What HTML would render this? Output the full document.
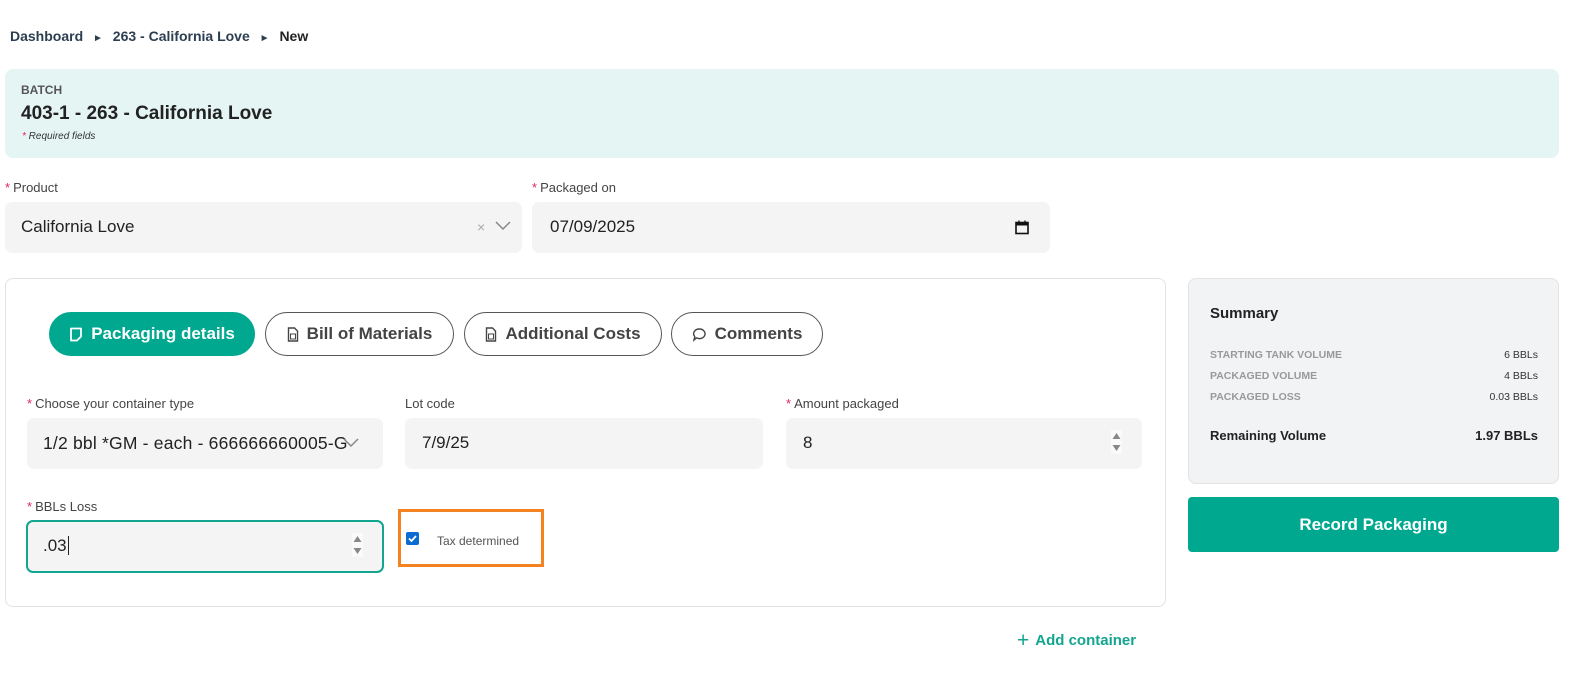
<!DOCTYPE html>
<html><head><style>
*{box-sizing:border-box;margin:0;padding:0}
body{width:1593px;height:700px;background:#fff;font-family:"Liberation Sans",sans-serif;color:#222;position:relative;overflow:hidden}
.a{position:absolute;white-space:nowrap}
.fld{position:absolute;background:#f4f4f4;border-radius:7px}
.lbl{position:absolute;font-size:13px;color:#444;white-space:nowrap}
.lbl b{color:#e0245e;font-weight:normal;margin-right:3px}
.tab{position:absolute;top:312px;height:44px;border:1px solid #555;border-radius:22px;font-size:17px;font-weight:bold;color:#444;display:flex;align-items:center;justify-content:center;gap:8px}
.row{position:absolute;left:1210px;width:328px;display:flex;justify-content:space-between;font-size:10.5px;color:#999;font-weight:bold}
.row span:last-child{color:#333;font-weight:normal}
.spin{position:absolute;width:11px;height:24px}
</style></head><body>
<div class="a" style="left:10px;top:28px;font-size:14px;font-weight:bold;color:#2c3e50">Dashboard <span style="font-size:10px;margin:0 6px">&#9658;</span> 263 - California Love <span style="font-size:10px;margin:0 6px">&#9658;</span> <span style="color:#222">New</span></div>

<div class="a" style="left:5px;top:69px;width:1554px;height:89px;background:#e5f5f3;border-radius:8px"></div>
<div class="a" style="left:21px;top:83px;font-size:12px;font-weight:bold;color:#555">BATCH</div>
<div class="a" style="left:21px;top:103px;font-size:19px;font-weight:bold;color:#222">403-1 - 263 - California Love</div>
<div class="a" style="left:22px;top:131px;font-size:10px;font-style:italic;color:#333"><span style="color:#e0245e">*</span> Required fields</div>

<div class="lbl" style="left:5px;top:180px"><b>*</b>Product</div>
<div class="fld" style="left:5px;top:202px;width:517px;height:51px"></div>
<div class="a" style="left:21px;top:217px;font-size:17px">California Love</div>
<div class="a" style="left:477px;top:219px;font-size:14px;color:#aaa">×</div>
<svg class="a" style="left:495px;top:221px" width="16" height="10"><path d="M1 1l7 7 7-7" fill="none" stroke="#888" stroke-width="1.5"/></svg>

<div class="lbl" style="left:532px;top:180px"><b>*</b>Packaged on</div>
<div class="fld" style="left:532px;top:202px;width:518px;height:51px"></div>
<div class="a" style="left:550px;top:217px;font-size:17px">07/09/2025</div>
<svg class="a" style="left:1015px;top:220px" width="14" height="15"><rect x="1" y="2.5" width="12" height="11" fill="none" stroke="#111" stroke-width="1.6"/><rect x="1" y="2.5" width="12" height="3" fill="#111"/><path d="M4 0.5v3M10 0.5v3" stroke="#111" stroke-width="1.3"/></svg>

<div class="a" style="left:5px;top:278px;width:1161px;height:329px;border:1px solid #e3e3e3;border-radius:8px"></div>

<div class="tab" style="left:49px;width:206px;background:#00a88f;border-color:#00a88f;color:#fff">
<svg width="14" height="15"><path d="M2 1.5h10v8l-4 4H2z" fill="none" stroke="#fff" stroke-width="1.8" stroke-linejoin="round"/></svg>Packaging details</div>
<div class="tab" style="left:265px;width:189px"><svg width="12" height="15"><path d="M1.5 1h6l3 3v10h-9z" fill="none" stroke="#444" stroke-width="1.4"/><rect x="3.5" y="7" width="5" height="5" fill="none" stroke="#444"/></svg>Bill of Materials</div>
<div class="tab" style="left:464px;width:198px"><svg width="12" height="15"><path d="M1.5 1h6l3 3v10h-9z" fill="none" stroke="#444" stroke-width="1.4"/><rect x="3.5" y="7" width="5" height="5" fill="none" stroke="#444"/></svg>Additional Costs</div>
<div class="tab" style="left:671px;width:152px"><svg width="15" height="15"><path d="M7.5 2a5.5 4.8 0 1 1-3 8.8L2 13l.8-3.3A5.5 4.8 0 0 1 7.5 2z" fill="none" stroke="#444" stroke-width="1.4"/></svg>Comments</div>

<div class="lbl" style="left:27px;top:396px"><b>*</b>Choose your container type</div>
<div class="fld" style="left:27px;top:418px;width:356px;height:51px;overflow:hidden"><div class="a" style="left:16px;top:15px;font-size:17.5px;letter-spacing:0.2px">1/2 bbl *GM - each - 666666660005-G</div>
<svg class="a" style="left:316px;top:20px" width="16" height="10"><path d="M1 1l7 7 7-7" fill="none" stroke="#888" stroke-width="1.5"/></svg></div>
<div class="lbl" style="left:405px;top:396px">Lot code</div>
<div class="fld" style="left:405px;top:418px;width:358px;height:51px"></div>
<div class="a" style="left:422px;top:433px;font-size:17px">7/9/25</div>
<div class="lbl" style="left:786px;top:396px"><b>*</b>Amount packaged</div>
<div class="fld" style="left:786px;top:418px;width:356px;height:51px"></div>
<div class="a" style="left:803px;top:433px;font-size:17px">8</div>
<svg class="spin" style="left:1111px;top:430px"><rect width="11" height="24" fill="#fafafa"/><path d="M1.5 9L5.5 3 9.5 9zM1.5 15l4 6 4-6z" fill="#888"/></svg>

<div class="lbl" style="left:27px;top:499px"><b>*</b>BBLs Loss</div>
<div class="fld" style="left:26px;top:520px;width:358px;height:53px;border:2px solid #12a58f"></div>
<div class="a" style="left:43px;top:536px;font-size:17px">.03<span style="border-left:1px solid #222;margin-left:1px"></span></div>
<svg class="spin" style="left:352px;top:533px"><rect width="11" height="24" fill="#fafafa"/><path d="M1.5 9L5.5 3 9.5 9zM1.5 15l4 6 4-6z" fill="#888"/></svg>

<div class="a" style="left:398px;top:509px;width:146px;height:58px;border:3px solid #f58220"></div>
<svg class="a" style="left:406px;top:532px" width="13" height="13"><rect width="13" height="13" rx="2" fill="#0b6bd3"/><path d="M3 6.5l2.5 2.5 4.5-5" fill="none" stroke="#fff" stroke-width="1.8"/></svg>
<div class="a" style="left:437px;top:534px;font-size:12px;color:#555">Tax determined</div>

<div class="a" style="left:1017px;top:629px;font-size:15px;font-weight:bold;color:#13a58f"><span style="font-size:21px;font-weight:normal;vertical-align:-2px;margin-right:6px">+</span>Add container</div>

<div class="a" style="left:1188px;top:278px;width:371px;height:206px;background:#f2f3f5;border:1px solid #e3e3e3;border-radius:8px"></div>
<div class="a" style="left:1210px;top:305px;font-size:15px;font-weight:bold">Summary</div>
<div class="row" style="top:349px"><span>STARTING TANK VOLUME</span><span>6 BBLs</span></div>
<div class="row" style="top:370px"><span>PACKAGED VOLUME</span><span>4 BBLs</span></div>
<div class="row" style="top:391px"><span>PACKAGED LOSS</span><span>0.03 BBLs</span></div>
<div class="row" style="top:428px;font-size:13px;color:#222"><span>Remaining Volume</span><span style="font-weight:bold!important;color:#222">1.97 BBLs</span></div>

<div class="a" style="left:1188px;top:497px;width:371px;height:55px;background:#00a88f;border-radius:4px;color:#fff;font-size:17px;font-weight:bold;display:flex;align-items:center;justify-content:center">Record Packaging</div>
</body></html>
